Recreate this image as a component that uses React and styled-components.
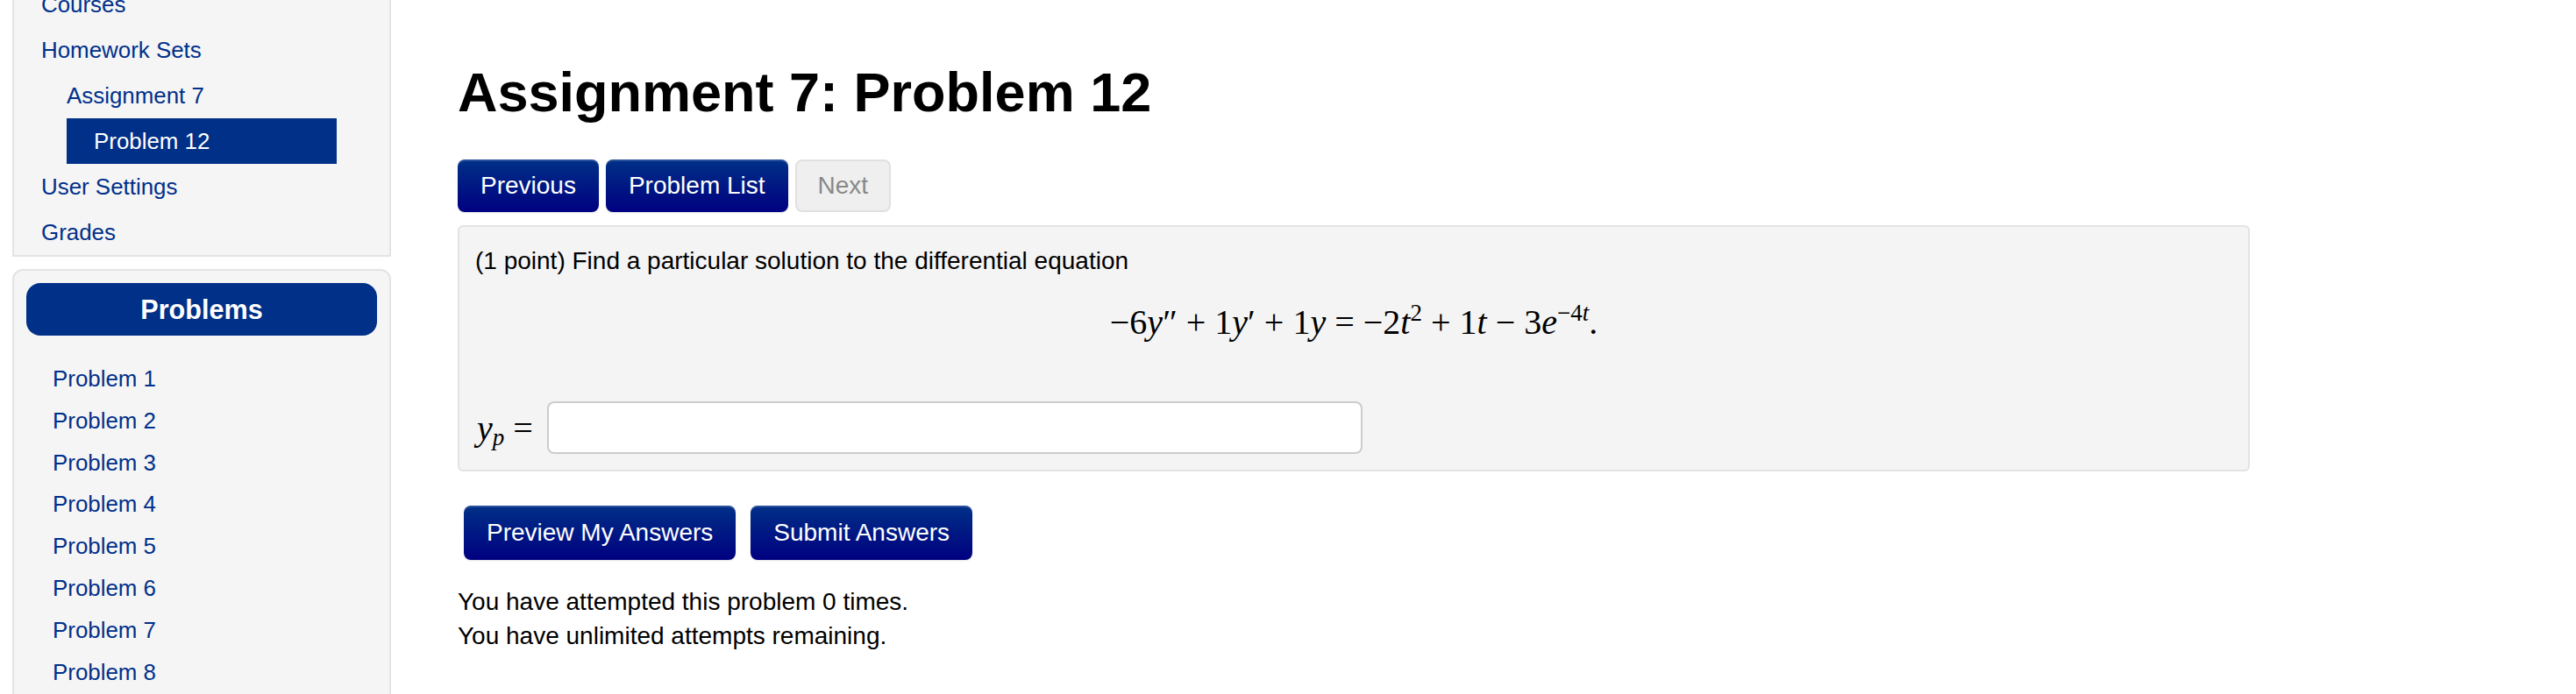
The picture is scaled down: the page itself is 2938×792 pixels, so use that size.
import React from 'react';
import styled, { createGlobalStyle } from 'styled-components';

const Global = createGlobalStyle`
  html, body { margin: 0; padding: 0; background: #fff; height: 792px; overflow: hidden; }
  body { font-family: "Liberation Sans", Arial, sans-serif; font-size: 28px; color: #000; }
`;

const Page = styled.div`
  display: flex;
  align-items: flex-start;
  height: 792px;
  overflow: hidden;
`;

const Sidebar = styled.aside`
  flex: none;
  width: 432px;
  margin-left: 14px;
  margin-top: -23px;
  display: flex;
  flex-direction: column;
  gap: 14px;
  font-size: 25.9px;
`;

const Well = styled.div`
  box-sizing: border-box;
  background: #f5f5f5;
  border: 2px solid #e3e3e3;
  border-radius: ${p => p.$radius || 0}px;
  padding: ${p => p.$pad};
`;

const NavLink = styled.a`
  display: block;
  height: 52px;
  line-height: 52px;
  box-sizing: border-box;
  color: #00308a;
  text-decoration: none;
  margin-left: ${p => p.$indent || 0}px;
  padding-left: ${p => p.$active ? 31 : 0}px;
  margin-right: ${p => p.$active ? 60 : 0}px;
  background: ${p => p.$active ? '#003087' : 'transparent'};
  ${p => p.$active && 'color: #fff;'}
`;

const PanelTitle = styled.div`
  height: 60px;
  line-height: 60px;
  background: #003087;
  color: #fff;
  font-weight: 700;
  font-size: 30.6px;
  text-align: center;
  border-radius: 16px;
`;

const ProblemList = styled.div`
  display: flex;
  flex-direction: column;
  padding: 26px 0 40px 30px;
`;

const ProblemLink = styled.a`
  display: block;
  height: 47.8px;
  line-height: 47.8px;
  color: #00308a;
  text-decoration: none;
`;

const Main = styled.main`
  flex: none;
  width: 2044px;
  margin-left: 76px;
  display: flex;
  flex-direction: column;
`;

const Title = styled.h1`
  margin: 65px 0 0;
  font-size: 63px;
  line-height: 80px;
  font-weight: 700;
  color: #000;
`;

const ButtonRow = styled.div`
  display: flex;
  gap: ${p => p.$gap}px;
  margin: ${p => p.$margin};
`;

const Button = styled.a`
  box-sizing: border-box;
  height: ${p => p.$h || 60}px;
  padding: 0 26px;
  display: flex;
  align-items: center;
  border-radius: 8px;
  color: #fff;
  background: linear-gradient(#003087, #000080);
  box-shadow: inset 0 2px 0 rgba(255,255,255,.16), 0 1px 2px rgba(0,0,0,.12);
`;

const DisabledButton = styled(Button)`
  color: #888;
  background: #efefef;
  border: 2px solid #e0e0e0;
  box-shadow: none;
  padding: 0 24px;
`;

const ProblemBox = styled.section`
  box-sizing: border-box;
  height: 281px;
  margin-top: 15px;
  padding: 20px 18px;
  background: #f4f4f4;
  border: 2px solid #e3e3e3;
  border-radius: 6px;
  display: flex;
  flex-direction: column;
`;

const Statement = styled.div`
  line-height: 37px;
`;

const Equation = styled.div`
  margin-top: 32px;
  height: 40px;
  line-height: 40px;
  text-align: center;
  font-family: "Liberation Serif", "Times New Roman", serif;
  font-size: 40px;
  white-space: pre;
`;

const I = styled.i`
  font-style: italic;
`;

const Sup = styled.span`
  font-size: 27px;
  line-height: 0;
  vertical-align: 15px;
`;

const Sub = styled.span`
  font-size: 27px;
  line-height: 0;
  vertical-align: -6px;
  font-style: italic;
`;

const AnswerRow = styled.div`
  margin-top: 70px;
  display: flex;
  align-items: center;
  gap: 16px;
  font-family: "Liberation Serif", "Times New Roman", serif;
  font-size: 40px;
  padding-left: 2px;
`;

const AnswerInput = styled.input`
  box-sizing: border-box;
  width: 930px;
  height: 60px;
  background: #fff;
  border: 2px solid #ccc;
  border-radius: 8px;
  outline: none;
`;

const Attempts = styled.div`
  margin-top: 28px;
  line-height: 39px;
`;

const problems = [1, 2, 3, 4, 5, 6, 7, 8];

export default function App() {
  return (
    <>
      <Global />
      <Page>
        <Sidebar>
          <Well $pad="0 0 0 31px">
            <NavLink>Courses</NavLink>
            <NavLink>Homework Sets</NavLink>
            <NavLink $indent={29}>Assignment 7</NavLink>
            <NavLink $indent={29} $active>Problem 12</NavLink>
            <NavLink>User Settings</NavLink>
            <NavLink>Grades</NavLink>
          </Well>
          <Well $radius={12} $pad="14px 14px 0">
            <PanelTitle>Problems</PanelTitle>
            <ProblemList>
              {problems.map(n => <ProblemLink key={n}>Problem {n}</ProblemLink>)}
            </ProblemList>
          </Well>
        </Sidebar>
        <Main>
          <Title>Assignment 7: Problem 12</Title>
          <ButtonRow $gap={8} $margin="37px 0 0">
            <Button>Previous</Button>
            <Button>Problem List</Button>
            <DisabledButton>Next</DisabledButton>
          </ButtonRow>
          <ProblemBox>
            <Statement>(1 point) Find a particular solution to the differential equation</Statement>
            <Equation>
              <span>−6<I>y</I>″ + 1<I>y</I>′ + 1<I>y</I> = −2<I>t</I><Sup>2</Sup> + 1<I>t</I> − 3<I>e</I><Sup>−4<I>t</I></Sup>.</span>
            </Equation>
            <AnswerRow>
              <span><I>y</I><Sub>p</Sub> =</span>
              <AnswerInput />
            </AnswerRow>
          </ProblemBox>
          <ButtonRow $gap={17} $margin="39px 0 0 7px">
            <Button $h={62}>Preview My Answers</Button>
            <Button $h={62}>Submit Answers</Button>
          </ButtonRow>
          <Attempts>
            You have attempted this problem 0 times.<br />
            You have unlimited attempts remaining.
          </Attempts>
        </Main>
      </Page>
    </>
  );
}
